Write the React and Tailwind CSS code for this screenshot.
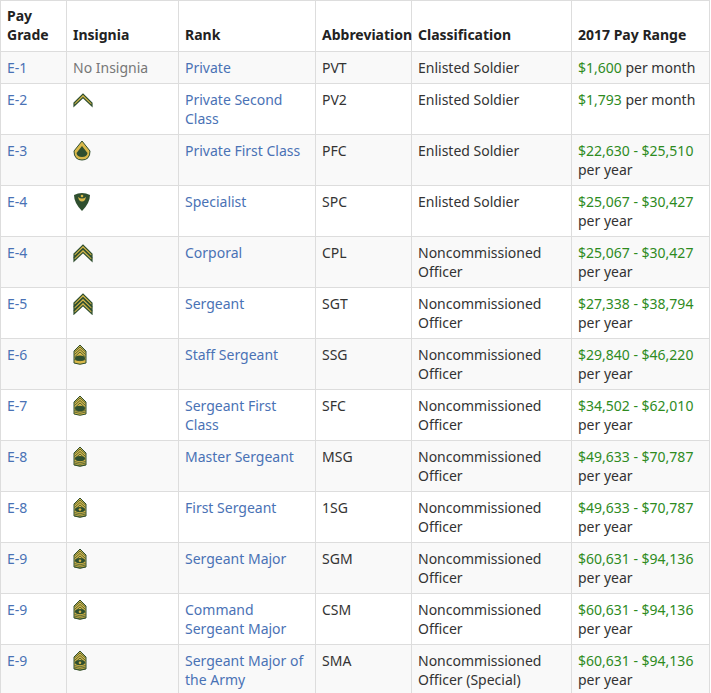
const rows = [
  ["E-1", null, "Private", "PVT", "Enlisted Soldier", "$1,600", " per month"],
  ["E-2", "pv2", "Private Second Class", "PV2", "Enlisted Soldier", "$1,793", " per month"],
  ["E-3", "pfc", "Private First Class", "PFC", "Enlisted Soldier", "$22,630 - $25,510", " per year"],
  ["E-4", "spc", "Specialist", "SPC", "Enlisted Soldier", "$25,067 - $30,427", " per year"],
  ["E-4", "cpl", "Corporal", "CPL", "Noncommissioned Officer", "$25,067 - $30,427", " per year"],
  ["E-5", "sgt", "Sergeant", "SGT", "Noncommissioned Officer", "$27,338 - $38,794", " per year"],
  ["E-6", "ssg", "Staff Sergeant", "SSG", "Noncommissioned Officer", "$29,840 - $46,220", " per year"],
  ["E-7", "sfc", "Sergeant First Class", "SFC", "Noncommissioned Officer", "$34,502 - $62,010", " per year"],
  ["E-8", "msg", "Master Sergeant", "MSG", "Noncommissioned Officer", "$49,633 - $70,787", " per year"],
  ["E-8", "1sg", "First Sergeant", "1SG", "Noncommissioned Officer", "$49,633 - $70,787", " per year"],
  ["E-9", "sgm", "Sergeant Major", "SGM", "Noncommissioned Officer", "$60,631 - $94,136", " per year"],
  ["E-9", "csm", "Command Sergeant Major", "CSM", "Noncommissioned Officer", "$60,631 - $94,136", " per year"],
  ["E-9", "sma", "Sergeant Major of the Army", "SMA", "Noncommissioned Officer (Special)", "$60,631 - $94,136", " per year"],
];

const G = "#2f4f2f", Y = "#d9b84a";

function Chevrons({ n }) {
  const els = [];
  for (let i = 0; i < n; i++) {
    const y = 1 + i * 4;
    els.push(<path key={i} d={`M1 ${y + 9} L10 ${y} L19 ${y + 9} L19 ${y + 12} L10 ${y + 3.5} L1 ${y + 12} Z`} fill={Y} stroke={G} strokeWidth="1.2" />);
  }
  return <svg width="20" height="22" viewBox={`0 0 20 ${14 + (n - 1) * 4}`}>{els}</svg>;
}

function Stripes({ rockers, device }) {
  return (
    <svg width="14" height="22" viewBox="0 0 14 22">
      <path d="M7 1 L13 7 L13 19 Q7 21.5 1 19 L1 7 Z" fill={Y} stroke={G} strokeWidth="1" />
      {[0, 1, 2].map((i) => (
        <path key={i} d={`M1.5 ${8 + i * 2.5} L7 ${3 + i * 2.5} L12.5 ${8 + i * 2.5}`} fill="none" stroke={G} strokeWidth="0.8" />
      ))}
      <ellipse cx="7" cy={15 - rockers * 0.8} rx="5" ry="2.6" fill={G} />
      {Array.from({ length: rockers }).map((_, i) => (
        <path key={"r" + i} d={`M1.5 ${15.5 + i * 1.6} Q7 ${18 + i * 1.6} 12.5 ${15.5 + i * 1.6}`} fill="none" stroke={G} strokeWidth="0.7" />
      ))}
      {device === "diamond" && <path d="M7 11 l1.6 1.6 l-1.6 1.6 l-1.6 -1.6 Z" fill={Y} />}
      {device === "star" && <circle cx="7" cy="12.8" r="1.3" fill={Y} />}
    </svg>
  );
}

function Insignia({ k }) {
  if (!k) return <span className="text-[#777]">No Insignia</span>;
  if (k === "pv2") return <Chevrons n={1} />;
  if (k === "cpl") return <Chevrons n={2} />;
  if (k === "sgt") return <Chevrons n={3} />;
  if (k === "pfc")
    return (
      <svg width="18" height="21">
        <path d="M9 1 L17 11 Q17 20 9 20 Q1 20 1 11 Z" fill={Y} stroke={G} />
        <path d="M9 6 L14.5 13 Q14 17 9 17 Q4 17 3.5 13 Z" fill={G} />
      </svg>
    );
  if (k === "spc")
    return (
      <svg width="18" height="21">
        <path d="M1 4 Q9 0 17 4 Q17 12 9 20 Q1 12 1 4 Z" fill={G} />
        <path d="M5 6 Q9 9 13 6 L12 9 Q9 12 6 9 Z" fill={Y} />
        <circle cx="9" cy="5" r="1.3" fill={Y} />
      </svg>
    );
  const map = { ssg: [1], sfc: [2], msg: [3], "1sg": [3, "diamond"], sgm: [3, "star"], csm: [3, "star"], sma: [3, "star"] };
  const [r, d] = map[k];
  return <Stripes rockers={r} device={d} />;
}

export default function App() {
  const cell = "border border-[#ddd] px-[6px] pt-[6px] pb-[6px] align-top";
  const heads = ["Pay Grade", "Insignia", "Rank", "Abbreviation", "Classification", "2017 Pay Range"];
  const widths = ["w-[66px]", "w-[112px]", "w-[137px]", "w-[96px]", "w-[160px]", "w-[138px]"];
  return (
    <div className="bg-white font-['Liberation_Sans',Arial,sans-serif]">
      <table className="w-[709px] table-fixed border-collapse text-[14px] leading-[19px] text-[#333]">
        <thead>
          <tr className="h-[51px]">
            {heads.map((h, i) => (
              <th key={h} className={widths[i] + " border border-[#ddd] px-[6px] pb-[7px] align-bottom text-left font-bold text-[#222]"}>{h}</th>
            ))}
          </tr>
        </thead>
        <tbody>
          {rows.map((r, i) => (
            <tr key={i} className={(i % 2 === 0 ? "bg-[#f9f9f9] " : "bg-white ") + (i === 0 ? "h-[32px]" : "h-[51px]")}>
              <td className={cell + " text-[#4a72b5]"}>{r[0]}</td>
              <td className={cell}><div className="h-[19px] overflow-visible">{r[1] ? <div className="-mt-[1px]"><Insignia k={r[1]} /></div> : <Insignia k={null} />}</div></td>
              <td className={cell + " text-[#4a72b5]"}>{r[2]}</td>
              <td className={cell}>{r[3]}</td>
              <td className={cell}>{r[4]}</td>
              <td className={cell}><span className="text-[#2e8b1e]">{r[5]}</span>{r[6]}</td>
            </tr>
          ))}
        </tbody>
      </table>
    </div>
  );
}
